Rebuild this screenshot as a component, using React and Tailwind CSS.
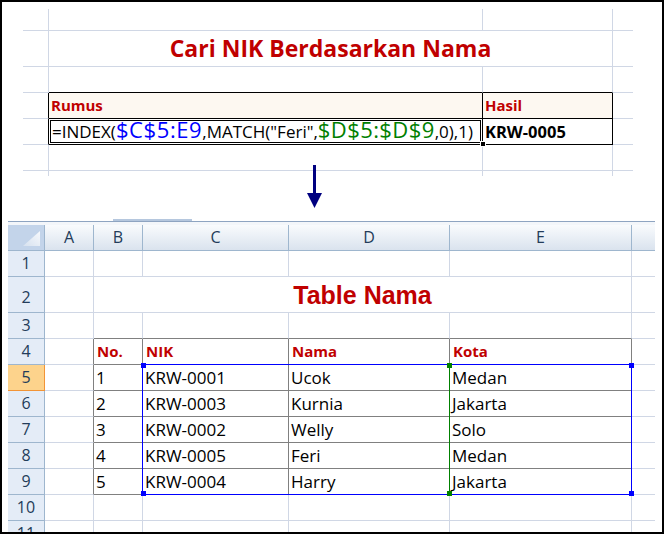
import React from "react";

const people = [
  ["1", "KRW-0001", "Ucok", "Medan"],
  ["2", "KRW-0003", "Kurnia", "Jakarta"],
  ["3", "KRW-0002", "Welly", "Solo"],
  ["4", "KRW-0005", "Feri", "Medan"],
  ["5", "KRW-0004", "Harry", "Jakarta"],
];

function RowHead({ n, active }) {
  return (
    <div
      className={
        active
          ? "w-[37px] shrink-0 flex justify-center border-r border-b border-[#f29436] bg-[#fdd38c] text-[16px] leading-[25px] text-[#233c5a]"
          : "w-[37px] shrink-0 flex justify-center border-r border-b border-[#9eb6ce] bg-[#e4ecf7] text-[16px] leading-[25px] text-[#233c5a]"
      }
    >
      {n}
    </div>
  );
}

function PlainRow({ n }) {
  return (
    <div className="flex h-[26px]">
      <RowHead n={n} />
      <div className="w-[49px] shrink-0 border-r border-b border-[#d0d7e5]" />
      <div className="w-[49px] shrink-0 border-r border-b border-[#d0d7e5]" />
      <div className="w-[146px] shrink-0 border-r border-b border-[#d0d7e5]" />
      <div className="w-[161px] shrink-0 border-r border-b border-[#d0d7e5]" />
      <div className="w-[182px] shrink-0 border-r border-b border-[#d0d7e5]" />
      <div className="w-[23px] shrink-0 border-b border-[#d0d7e5]" />
    </div>
  );
}

function TableRow({ n, cells, head, active }) {
  const cell = head
    ? "shrink-0 border-r border-b border-[#808080] pl-[3px] text-[15px] font-bold leading-[25px] text-[#c00000] whitespace-nowrap"
    : "shrink-0 border-r border-b border-[#808080] pl-[2px] text-[17px] leading-[25px] text-black whitespace-nowrap";
  return (
    <div className="flex h-[26px]">
      <RowHead n={n} active={active} />
      <div className="w-[49px] shrink-0 border-r border-b border-r-[#808080] border-b-[#d0d7e5]" />
      <div className={"w-[49px] " + cell}>{cells[0]}</div>
      <div className={"w-[146px] " + cell}>{cells[1]}</div>
      <div className={"w-[161px] " + cell}>{cells[2]}</div>
      <div className={"w-[182px] " + cell}>{cells[3]}</div>
      <div className="w-[23px] shrink-0 border-b border-[#d0d7e5]" />
    </div>
  );
}

const colHeads = [
  { l: "A", w: "w-[49px]" },
  { l: "B", w: "w-[49px]" },
  { l: "C", w: "w-[146px]" },
  { l: "D", w: "w-[161px]" },
  { l: "E", w: "w-[182px]" },
];

export default function App() {
  return (
    <div className="relative w-[664px] h-[534px] border-2 border-black bg-white overflow-hidden font-['Open_Sans',sans-serif] text-black">
      {/* Top section */}
      <div className="mt-[7px] ml-[21px] w-[610px]">
        <div className="flex h-[22px]">
          <div className="w-[26px] shrink-0 border-r border-b border-[#d0d7e5]" />
          <div className="w-[434px] shrink-0 border-r border-b border-[#d0d7e5]" />
          <div className="w-[130px] shrink-0 border-r border-b border-[#d0d7e5]" />
          <div className="w-[20px] shrink-0 border-b border-[#d0d7e5]" />
        </div>
        <div className="flex h-[36px]">
          <div className="w-[26px] shrink-0 border-r border-b border-[#d0d7e5]" />
          <div className="w-[564px] shrink-0 border-r border-b border-[#d0d7e5] flex justify-center text-[23px] font-bold leading-[35px] text-[#c00000] whitespace-nowrap">
            Cari NIK Berdasarkan Nama
          </div>
          <div className="w-[20px] shrink-0 border-b border-[#d0d7e5]" />
        </div>
        <div className="flex h-[26px]">
          <div className="w-[26px] shrink-0 border-r border-b border-[#d0d7e5]" />
          <div className="w-[434px] shrink-0 border-r border-b border-r-[#d0d7e5] border-b-black" />
          <div className="w-[130px] shrink-0 border-r border-b border-r-[#d0d7e5] border-b-black" />
          <div className="w-[20px] shrink-0 border-b border-[#d0d7e5]" />
        </div>
        <div className="flex h-[26px]">
          <div className="w-[26px] shrink-0 border-r border-b border-r-black border-b-[#d0d7e5]" />
          <div className="w-[434px] shrink-0 border-r border-b border-black bg-[#fdf8f1] pl-[2px] text-[15px] font-bold leading-[25px] text-[#c00000]">
            Rumus
          </div>
          <div className="w-[130px] shrink-0 border-r border-b border-black bg-[#fdf8f1] pl-[2px] text-[15px] font-bold leading-[25px] text-[#c00000]">
            Hasil
          </div>
          <div className="w-[20px] shrink-0 border-b border-[#d0d7e5]" />
        </div>
        <div className="flex h-[26px]">
          <div className="w-[26px] shrink-0 border-r border-b border-r-black border-b-[#d0d7e5]" />
          <div className="relative w-[434px] shrink-0 border-r border-b border-black">
            <div className="m-[1px] h-[23px] border border-black pl-[1px] text-[17px] leading-[21px] whitespace-nowrap">
              <span>=INDEX(</span>
              <span className="text-[22px] leading-[17px] tracking-[0.6px] text-[#0000ff]">$C$5:E9</span>
              <span>{',MATCH("Feri",'}</span>
              <span className="text-[22px] leading-[17px] tracking-[0.4px] text-[#008000]">$D$5:$D$9</span>
              <span>,0),1)</span>
            </div>
            <div className="absolute left-[431px] top-[22px] w-[6px] h-[6px] bg-black border border-white" />
          </div>
          <div className="w-[130px] shrink-0 border-r border-b border-black pl-[2px] text-[16.5px] font-bold leading-[25px] whitespace-nowrap">
            KRW-0005
          </div>
          <div className="w-[20px] shrink-0 border-b border-[#d0d7e5]" />
        </div>
        <div className="flex h-[26px]">
          <div className="w-[26px] shrink-0 border-r border-b border-[#d0d7e5]" />
          <div className="w-[434px] shrink-0 border-r border-b border-[#d0d7e5]" />
          <div className="w-[130px] shrink-0 border-r border-b border-[#d0d7e5]" />
          <div className="w-[20px] shrink-0 border-b border-[#d0d7e5]" />
        </div>
        <div className="flex h-[5px]">
          <div className="w-[26px] shrink-0 border-r border-[#d0d7e5]" />
          <div className="w-[434px] shrink-0 border-r border-[#d0d7e5]" />
          <div className="w-[130px] shrink-0 border-r border-[#d0d7e5]" />
          <div className="w-[20px] shrink-0" />
        </div>
      </div>

      {/* Arrow */}
      <svg className="absolute left-[305px] top-[163px]" width="16" height="44" viewBox="0 0 16 44">
        <rect x="6" y="0" width="3" height="30" fill="#000080" />
        <polygon points="0,28 15,28 7.5,43" fill="#000080" />
      </svg>

      {/* Spreadsheet */}
      <div className="mt-[43px] ml-[6px] w-[647px]">
        <div className="flex h-[2px]">
          <div className="w-[105px]" />
          <div className="w-[79px] bg-[#b5c7de]" />
        </div>
        <div className="h-[1px] bg-[#8ea4c1]" />
        <div className="h-[3px] bg-[#f3f6fa]" />
        <div className="flex h-[26px]">
          <div className="w-[37px] shrink-0 border-r border-b border-[#9eb6ce] bg-[#c3d4ea]">
            <svg width="36" height="25" viewBox="0 0 36 25">
              <defs>
                <linearGradient id="tri" x1="0" y1="1" x2="1" y2="0">
                  <stop offset="0" stopColor="#d6e1ef" />
                  <stop offset="1" stopColor="#f7f9fc" />
                </linearGradient>
              </defs>
              <polygon points="15,21 32,21 32,6" fill="url(#tri)" />
            </svg>
          </div>
          {colHeads.map((c) => (
            <div
              key={c.l}
              className={
                c.w +
                " shrink-0 border-r border-b border-[#9eb6ce] bg-linear-to-b from-[#f9fbfd] to-[#dae3ee] text-center text-[16px] leading-[25px] text-[#233c5a]"
              }
            >
              {c.l}
            </div>
          ))}
          <div className="w-[23px] shrink-0 border-b border-[#9eb6ce] bg-linear-to-b from-[#f9fbfd] to-[#dae3ee]" />
        </div>

        <div className="relative">
          <PlainRow n="1" />
          <div className="flex h-[36px]">
            <div className="w-[37px] shrink-0 flex items-end justify-center pb-[2px] border-r border-b border-[#9eb6ce] bg-[#e4ecf7] text-[16px] leading-[25px] text-[#233c5a]">
              2
            </div>
            <div className="w-[49px] shrink-0 border-r border-b border-[#d0d7e5]" />
            <div className="w-[538px] shrink-0 flex items-end justify-center pb-[2px] border-r border-b border-[#d0d7e5] font-['Liberation_Sans',Arial,sans-serif] text-[25px] font-bold leading-[30px] text-[#c00000] whitespace-nowrap">
              Table Nama
            </div>
            <div className="w-[23px] shrink-0 border-b border-[#d0d7e5]" />
          </div>
          <div className="flex h-[26px]">
            <RowHead n="3" />
            <div className="w-[49px] shrink-0 border-r border-b border-[#d0d7e5]" />
            <div className="w-[49px] shrink-0 border-r border-b border-r-[#d0d7e5] border-b-[#808080]" />
            <div className="w-[146px] shrink-0 border-r border-b border-r-[#d0d7e5] border-b-[#808080]" />
            <div className="w-[161px] shrink-0 border-r border-b border-r-[#d0d7e5] border-b-[#808080]" />
            <div className="w-[182px] shrink-0 border-r border-b border-r-[#d0d7e5] border-b-[#808080]" />
            <div className="w-[23px] shrink-0 border-b border-[#d0d7e5]" />
          </div>
          <TableRow n="4" head cells={["No.", "NIK", "Nama", "Kota"]} />
          {people.map((p, i) => (
            <TableRow key={p[0]} n={String(i + 5)} cells={p} active={i === 0} />
          ))}
          <PlainRow n="10" />
          <PlainRow n="11" />

          {/* selection overlay */}
          <div className="absolute left-[134px] top-[113px] w-[490px] h-[131px] border border-[#0000ff]" />
          <div className="absolute left-[441px] top-[113px] w-[1px] h-[131px] bg-[#008000]" />
          <div className="absolute left-[133px] top-[112px] w-[5px] h-[5px] bg-[#0000ff]" />
          <div className="absolute left-[133px] top-[240px] w-[5px] h-[5px] bg-[#0000ff]" />
          <div className="absolute left-[621px] top-[112px] w-[5px] h-[5px] bg-[#0000ff]" />
          <div className="absolute left-[621px] top-[240px] w-[5px] h-[5px] bg-[#0000ff]" />
          <div className="absolute left-[439px] top-[112px] w-[5px] h-[5px] bg-[#008000]" />
          <div className="absolute left-[439px] top-[240px] w-[5px] h-[5px] bg-[#008000]" />
        </div>
      </div>
    </div>
  );
}
